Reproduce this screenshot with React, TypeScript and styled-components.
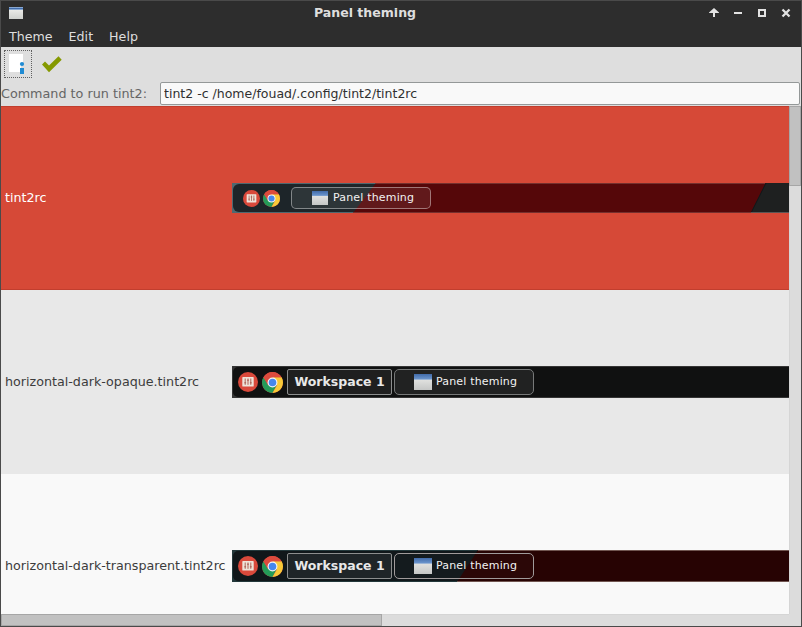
import React from "react";
import styled, { createGlobalStyle } from "styled-components";

const GlobalStyle = createGlobalStyle`
  * { box-sizing: border-box; }
  html, body { margin: 0; width: 802px; height: 627px; overflow: hidden; }
  body { font: 13px/16px "DejaVu Sans", sans-serif; }
  svg { display: block; flex: none; }
`;

const Window = styled.div`
  width: 802px;
  height: 627px;
  border: 1px solid #4a4a4a;
  background: #dedede;
  display: flex;
  flex-direction: column;
  overflow: hidden;
`;
const TitleBar = styled.header`
  height: 24px;
  flex: none;
  background: #2d2d2d;
  color: #dedede;
  display: grid;
  grid-template-columns: 30px 1fr 100px;
  align-items: center;
  padding: 0 9px 0 8px;
`;
const Title = styled.div`
  padding-right: 1px;
  font-size: 12.55px;
  font-weight: bold;
  text-align: center;
  white-space: nowrap;
`;
const Controls = styled.div`
  display: flex;
  justify-content: flex-end;
  gap: 12px;
`;
const MenuBar = styled.nav`
  height: 22px;
  flex: none;
  background: #2d2d2d;
  color: #dedede;
  display: flex;
  align-items: center;
  gap: 16px;
  padding: 2px 8px 0;
  font-size: 12.65px;
`;
const ToolBar = styled.div`
  height: 34px;
  flex: none;
  display: flex;
  align-items: center;
  padding-left: 3px;
  gap: 8px;
`;
const ToolButton = styled.button<{ $focused?: boolean }>`
  width: 28px;
  height: 28px;
  padding: 0;
  border: 1px dotted ${(p) => (p.$focused ? "#606060" : "transparent")};
  background: transparent;
`;
const CommandRow = styled.label`
  height: 25px;
  flex: none;
  display: flex;
  align-items: center;
  color: #656565;
  font-size: 12.75px;
`;
const CommandLabel = styled.span`
  width: 159px;
  flex: none;
  white-space: nowrap;
`;
const CommandInput = styled.input`
  flex: 1;
  height: 23px;
  margin-right: 1px;
  padding: 0 2px 1px 3px;
  border: 1px solid #949898;
  border-radius: 2px;
  background: #f9f9f9;
  color: #303030;
  font: inherit;
  font-size: 12.53px;
  outline: 0;
`;
const Viewport = styled.main`
  height: 520px;
  display: grid;
  grid-template: 508px 12px / 788px 12px;
`;
const List = styled.div`
  overflow: hidden;
`;
const Row = styled.div<{ $bg: string; $fg: string; $edge?: string }>`
  height: 184px;
  display: flex;
  align-items: center;
  background: ${(p) => p.$bg};
  color: ${(p) => p.$fg};
  box-shadow: inset 0 1px ${(p) => p.$edge ?? "transparent"}, inset 0 -1px ${(p) => p.$edge ?? "transparent"};
`;
const RowName = styled.div`
  width: 231px;
  flex: none;
  padding-left: 4px;
  font-size: 12.7px;
  white-space: nowrap;
`;
const Preview = styled.div<{ $kind: Kind }>`
  position: relative;
  width: 557px;
  height: ${(p) => (p.$kind === "current" ? 30 : 32)}px;
  display: flex;
  align-items: center;
  padding-left: ${(p) => (p.$kind === "current" ? 10.5 : 5.5)}px;
  overflow: hidden;
  isolation: isolate;
`;
const Backdrop = styled.svg`
  position: absolute;
  inset: 0;
  z-index: -1;
`;
const Launchers = styled.div<{ $compact: boolean }>`
  display: flex;
  align-items: center;
  gap: ${(p) => (p.$compact ? 3 : 4)}px;
  margin-right: ${(p) => (p.$compact ? 11.5 : 4.5)}px;
`;
const Workspace = styled.div`
  width: 105px;
  height: 26px;
  margin-right: 2px;
  border: 1px solid #8c8e8e;
  border-radius: 2px;
  background: #ffffff10;
  color: #e8e8e8;
  font-size: 12.5px;
  font-weight: bold;
  line-height: 24px;
  text-align: center;
  white-space: nowrap;
`;
const Task = styled.div<{ $kind: Kind }>`
  width: 140px;
  height: ${(p) => (p.$kind === "current" ? 22 : 26)}px;
  display: flex;
  align-items: center;
  gap: ${(p) => (p.$kind === "current" ? 5 : 4)}px;
  padding-left: ${(p) => (p.$kind === "current" ? 20 : 19)}px;
  border: 1px solid ${(p) => (p.$kind === "current" ? "#ffffff68" : p.$kind === "opaque" ? "#777979" : "#a09b9b")};
  border-radius: 5px;
  background: ${(p) => (p.$kind === "transparent" ? "#ffffff05" : "#ffffff13")};
  color: #f2f2f2;
  font-size: 11px;
  letter-spacing: 0.17px;
  line-height: 14px;
  white-space: nowrap;
`;
const TaskLabel = styled.span`
  padding-bottom: 1px;
`;
const VerticalTrack = styled.div`
  background: #dcdcdc;
  border-left: 1px solid #d5d5d5;
`;
const VerticalThumb = styled.div`
  height: 80px;
  margin-left: -1px;
  border: 1px solid #a6a6a6;
  background: #c1c1c1;
`;
const HorizontalTrack = styled.div`
  background: #dcdcdc;
  border-top: 1px solid #d5d5d5;
`;
const HorizontalThumb = styled.div`
  width: 381px;
  height: 12px;
  margin-top: -1px;
  border: 1px solid #a6a6a6;
  background: #c1c1c1;
`;
const Corner = styled.div`
  background: #dcdcdc;
`;

type Kind = "current" | "opaque" | "transparent";

function WindowIcon() {
  return (
    <svg width="14" height="12" viewBox="0 0 14 12">
      <defs>
        <linearGradient id="window-body" x2="0" y2="1">
          <stop stopColor="#f2f2ef" />
          <stop offset="1" stopColor="#cfd1ce" />
        </linearGradient>
      </defs>
      <path fill="url(#window-body)" d="M0 0h14v12H0z" />
      <path fill="#88a8d2" d="M0 0h14v3H0z" />
      <path fill="#416cab" d="M0 1h14v1H0z" />
    </svg>
  );
}

function TaskIcon({ width, id }: { width: number; id: string }) {
  return (
    <svg width={width} height={width === 16 ? 14 : 16} viewBox="0 0 18 16" preserveAspectRatio="none">
      <defs>
        <linearGradient id={id} x2="0" y2="1">
          <stop stopColor="#f0f0ed" />
          <stop offset="1" stopColor="#c5c7c6" />
        </linearGradient>
        <linearGradient id={id + "-bar"} x2="0" y2="1">
          <stop stopColor="#416ba9" />
          <stop offset="1" stopColor="#6f99d0" />
        </linearGradient>
      </defs>
      <path fill={`url(#${id})`} d="M0 0h18v16H0z" />
      <path fill={`url(#${id}-bar)`} d="M0 0h18v5.6H0z" />
    </svg>
  );
}

function SettingsIcon({ size }: { size: number }) {
  return (
    <svg width={size} height={size} viewBox="0 0 20 20">
      <circle cx="10" cy="10" r="10" fill="#d9493b" />
      <rect x="4.3" y="5" width="11.4" height="9.6" rx=".7" fill="#eee4da" />
      <path d="M7.2 6.5v6.3M10 6.5v6.3M12.8 6.5v6.3M6.3 10.8h1.8M9.1 8.2h1.8M11.9 10.8h1.8" stroke="#a7564a" strokeWidth=".9" />
    </svg>
  );
}

function ChromeIcon({ size }: { size: number }) {
  return (
    <svg width={size} height={size} viewBox="0 0 20 20">
      <circle cx="10" cy="10" r="10" fill="#dc4b3d" />
      <path fill="#249b58" d="M1.34 5A10 10 0 0 0 10 20l4-7.7-8-.1z" />
      <path fill="#f8c938" d="M10 20a10 10 0 0 0 8.66-15H10l4.3 7.5z" />
      <path fill="#dc4b3d" d="M1.34 5A10 10 0 0 1 18.66 5H10L5.7 12.5z" />
      <circle cx="10" cy="10" r="4.7" fill="#f4f4f4" />
      <circle cx="10" cy="10" r="3.6" fill="#4587ed" />
    </svg>
  );
}

function PreviewBackdrop({ kind }: { kind: Kind }) {
  if (kind === "current") {
    return (
      <Backdrop width="557" height="30">
        <path fill="#4d6971" d="M0 0h557v30H0z" />
        <path fill="#1d2529" d="M7 1h550v28H7a6 6 0 0 1-6-6V7a6 6 0 0 1 6-6z" />
        <path fill="#550709" d="M144 0h390l-15 30H121z" />
        <path fill="#1e2020" d="M534 0h23v30h-38z" />
        <path fill="none" stroke="#111719" d="M534 0l-15 30" />
        <path fill="none" stroke="#74302e" d="M144 .5h389M121 29.5h398" />
        <path stroke="#5b5655" d="M519 29.5h38" />
      </Backdrop>
    );
  }
  return (
    <Backdrop width="557" height="32">
      <path fill={kind === "opaque" ? "#353535" : "#23383b"} d="M0 0h557v32H0z" />
      <path fill={kind === "opaque" ? "#101111" : "#10171a"} d="M6 1h551v30H6a5 5 0 0 1-5-5V6a5 5 0 0 1 5-5z" />
      {kind === "transparent" && (
        <>
          <path fill="#270303" d="M246 0h311v32H225z" />
          <path stroke="#715651" d="M246 .5h311M225 31.5h332" />
        </>
      )}
    </Backdrop>
  );
}

function PanelPreview({ kind }: { kind: Kind }) {
  const current = kind === "current";
  return (
    <Preview $kind={kind}>
      <PreviewBackdrop kind={kind} />
      <Launchers $compact={current}>
        <SettingsIcon size={current ? 17 : 20} />
        <ChromeIcon size={current ? 17 : 21} />
      </Launchers>
      {!current && <Workspace>Workspace 1</Workspace>}
      <Task $kind={kind}>
        <TaskIcon width={current ? 16 : 18} id={`task-${kind}`} />
        <TaskLabel>Panel theming</TaskLabel>
      </Task>
    </Preview>
  );
}

export default function App() {
  return (
    <>
      <GlobalStyle />
      <Window>
        <TitleBar>
          <WindowIcon />
          <Title>Panel theming</Title>
          <Controls>
            <svg width="12" height="12" viewBox="0 0 12 12">
              <path fill="#e2e2e2" d="M6 1l5 4.5V6H7v4H5V6H1v-.5z" />
            </svg>
            <svg width="12" height="12" viewBox="0 0 12 12">
              <path fill="#e2e2e2" d="M2 5h8v2H2z" />
            </svg>
            <svg width="12" height="12" viewBox="0 0 12 12">
              <path fill="none" stroke="#e2e2e2" strokeWidth="2" d="M3 3h6v6H3z" />
            </svg>
            <svg width="12" height="12" viewBox="0 0 12 12">
              <path stroke="#e2e2e2" strokeWidth="2.3" d="M2.5 2.5l7 7m0-7l-7 7" />
            </svg>
          </Controls>
        </TitleBar>
        <MenuBar>
          <span>Theme</span><span>Edit</span><span>Help</span>
        </MenuBar>
        <ToolBar>
          <ToolButton $focused aria-label="Theme properties">
            <svg width="26" height="26">
              <path fill="#fff" d="M4 3h14v8l-2 2v8H4z" />
              <circle cx="17" cy="13" r="2.1" fill="#208bd3" />
              <path fill="#208bd3" d="M15 17h4v6h-4z" />
            </svg>
          </ToolButton>
          <ToolButton aria-label="Apply theme">
            <svg width="26" height="26">
              <path fill="#859900" d="M1 13.5l3-3 4 4 9.5-9.2 3.2 3.5L8 21.3z" />
            </svg>
          </ToolButton>
        </ToolBar>
        <CommandRow>
          <CommandLabel>Command to run tint2:</CommandLabel>
          <CommandInput defaultValue="tint2 -c /home/fouad/.config/tint2/tint2rc" spellCheck={false} />
        </CommandRow>
        <Viewport>
          <List>
            <Row $bg="#d64937" $fg="#fff" $edge="#c13e2e">
              <RowName>tint2rc</RowName>
              <PanelPreview kind="current" />
            </Row>
            <Row $bg="#e8e8e8" $fg="#3c3c3c">
              <RowName>horizontal-dark-opaque.tint2rc</RowName>
              <PanelPreview kind="opaque" />
            </Row>
            <Row $bg="#f9f9f9" $fg="#3c3c3c">
              <RowName>horizontal-dark-transparent.tint2rc</RowName>
              <PanelPreview kind="transparent" />
            </Row>
          </List>
          <VerticalTrack><VerticalThumb /></VerticalTrack>
          <HorizontalTrack><HorizontalThumb /></HorizontalTrack>
          <Corner />
        </Viewport>
      </Window>
    </>
  );
}
